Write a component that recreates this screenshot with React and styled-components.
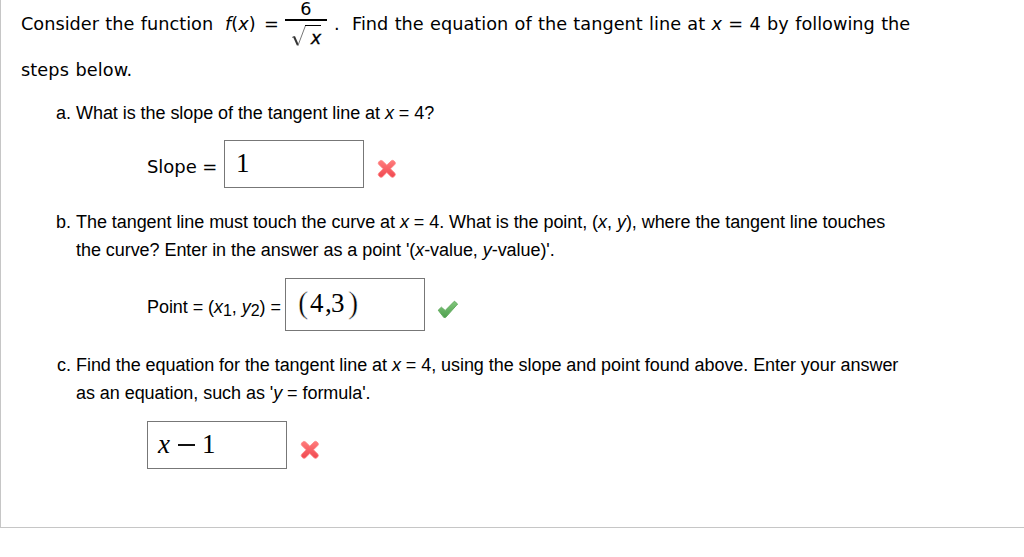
import React from 'react';
import styled, { createGlobalStyle } from 'styled-components';

const GlobalStyle = createGlobalStyle`
  body {
    margin: 0;
    background: #fff;
    color: #000;
  }
`;

const Page = styled.main`
  box-sizing: border-box;
  width: 1024px;
  height: 528px;
  border-left: 1px solid #c6c6c6;
  border-bottom: 1px solid #c6c6c6;
  font: 18px/27px 'Liberation Sans', Arial, sans-serif;
  letter-spacing: -0.055px;
  white-space: nowrap;
  overflow: hidden;
`;

const Intro = styled.header`
  padding-left: 20px;
  font-family: 'DejaVu Sans', Verdana, sans-serif;
  font-size: 17.7px;
  letter-spacing: 0.015px;
  word-spacing: 0.7px;
`;

const IntroLine = styled.div`
  display: grid;
  grid-template-columns: 204px 39px 21px 42px 25px 1fr;
  height: 48px;
  line-height: 48px;
`;

const IntroTail = styled.div`
  height: 44px;
  line-height: 44px;
  letter-spacing: 0.1px;
`;

const Period = styled.span`
  padding-left: 7px;
`;

const Fraction = styled.span`
  display: flex;
  flex-direction: column;
  align-items: center;
  height: 48px;
  line-height: 20px;
`;

const Numerator = styled.span`
  height: 19px;
  line-height: 18px;
`;

const FractionBar = styled.span`
  width: 100%;
  height: 2px;
  background: #000;
`;

const Denominator = styled.span`
  display: flex;
  height: 27px;
  line-height: 34px;
`;

const Radicand = styled.i`
  margin-left: -11px;
  -webkit-text-stroke: 0.3px #000;
`;

const Parts = styled.ol`
  list-style: none;
  margin: 0;
  padding: 8px 0 0 55px;
`;

const Part = styled.li`
  display: grid;
  grid-template-columns: 15px 1fr;
  column-gap: 5px;
  margin-bottom: 21px;
`;

const Marker = styled.span`
  text-align: right;
`;

const Line = styled.div`
  & + & {
    margin-top: 1px;
  }
`;

const AnswerRow = styled.div`
  display: flex;
  align-items: center;
  margin: ${(p) => p.$gap}px 0 0 71px;
`;

const AnswerLabel = styled.span`
  flex: none;
  width: ${(p) => p.$width}px;
  font-family: ${(p) => (p.$wide ? "'DejaVu Sans', Verdana, sans-serif" : 'inherit')};
  font-size: ${(p) => (p.$wide ? '18px' : '18px')};
  padding-top: ${(p) => p.$drop || 0}px;
`;

const Sub = styled.sub`
  font-size: 16px;
  line-height: 0;
  vertical-align: -3px;
`;

const AnswerBox = styled.div`
  box-sizing: border-box;
  display: flex;
  flex: none;
  width: 140px;
  height: ${(p) => p.$height}px;
  border: 1px solid #777;
  padding-left: ${(p) => p.$inset}px;
  font: 27px/${(p) => p.$line || 44}px 'Liberation Serif', 'Times New Roman', serif;
`;

const MathPart = styled.span`
  width: ${(p) => p.$width}px;
  font-style: ${(p) => (p.$italic ? 'italic' : 'normal')};
`;

const Paren = styled(MathPart)`
  font-size: 31px;
  -webkit-text-stroke: 0.5px #fff;
`;

const Minus = styled.span`
  width: 17px;
  height: 1.5px;
  margin: 22px 7px 0 0;
  background: #111;
`;

const Mark = styled.svg`
  flex: none;
  width: 22px;
  height: 22px;
  margin: 10px 0 0 11.5px;
`;

function Radical() {
  return (
    <svg width="31" height="27" viewBox="0 0 31 27" fill="none">
      <path d="M1 16.5 3 15.5" stroke="#777" strokeWidth="1" />
      <path d="M3 15.5 6.8 24" stroke="#333" strokeWidth="2" />
      <path d="M6.8 25 14.5 4.5" stroke="#777" strokeWidth="1" />
      <path d="M14 4.5H30" stroke="#000" strokeWidth="1" />
    </svg>
  );
}

function WrongMark() {
  return (
    <Mark viewBox="0 0 22 22" role="img" aria-label="Incorrect">
      <defs>
        <linearGradient id="wrong" x1="0" y1="0" x2="0" y2="1">
          <stop offset="0" stopColor="#ff7c7c" />
          <stop offset="1" stopColor="#f04850" />
        </linearGradient>
      </defs>
      <path
        d="M5 2.4Q6 2.4 6.6 3L10.8 7.1 15 3Q16.6 1.6 18.1 3L19 4Q20 5.2 18.8 6.5L14.5 10.8 18.8 15.1Q20 16.5 18.8 17.8L18 18.7Q16.6 20 15 18.7L10.8 14.5 6.6 18.7Q5 20 3.6 18.7L2.7 17.8Q1.6 16.5 2.8 15.1L7.1 10.8 2.8 6.5Q1.6 5.2 2.7 4L3.6 3Q4.2 2.4 5 2.4Z"
        fill="url(#wrong)"
        stroke="#ff8585"
        strokeWidth="0.8"
        strokeLinejoin="round"
      />
    </Mark>
  );
}

function RightMark() {
  return (
    <Mark viewBox="0 0 22 22" role="img" aria-label="Correct">
      <defs>
        <linearGradient id="right" x1="0" y1="0" x2="0" y2="1">
          <stop offset="0" stopColor="#82c77c" />
          <stop offset="1" stopColor="#4fa04f" />
        </linearGradient>
      </defs>
      <path
        d="M1.2 11.2 4.4 8.2 8.2 11.5 17.4 2.2 20.6 5 8.5 18.6 6.8 18.4Z"
        fill="url(#right)"
        stroke="#63ac60"
        strokeWidth="1"
        strokeLinejoin="round"
      />
    </Mark>
  );
}

export default function App() {
  return (
    <>
      <GlobalStyle />
      <Page>
        <Intro>
          <IntroLine>
            <span>Consider the function</span>
            <span><i>f</i>(<i>x</i>)</span>
            <span>=</span>
            <Fraction>
              <Numerator>6</Numerator>
              <FractionBar />
              <Denominator>
                <Radical />
                <Radicand>x</Radicand>
              </Denominator>
            </Fraction>
            <Period>.</Period>
            <span>Find the equation of the tangent line at <i>x</i> = 4 by following the</span>
          </IntroLine>
          <IntroTail>steps below.</IntroTail>
        </Intro>
        <Parts>
          <Part>
            <Marker>a.</Marker>
            <div>
              <Line>What is the slope of the tangent line at <i>x</i> = 4?</Line>
              <AnswerRow $gap={13}>
                <AnswerLabel $width={77} $wide $drop={5}>Slope =</AnswerLabel>
                <AnswerBox $height={48} $inset={11}>
                  <MathPart>1</MathPart>
                </AnswerBox>
                <WrongMark />
              </AnswerRow>
            </div>
          </Part>
          <Part>
            <Marker>b.</Marker>
            <div>
              <Line>The tangent line must touch the curve at <i>x</i> = 4. What is the point, (<i>x</i>, <i>y</i>), where the tangent line touches</Line>
              <Line>the curve? Enter in the answer as a point '(<i>x</i>-value, <i>y</i>-value)'.</Line>
              <AnswerRow $gap={14}>
                <AnswerLabel $width={138} $drop={6}>
                  Point = (<i>x</i><Sub>1</Sub>, <i>y</i><Sub>2</Sub>) =
                </AnswerLabel>
                <AnswerBox $height={53} $inset={12} $line={48}>
                  <Paren $width={12}>(</Paren>
                  <MathPart $width={15}>4</MathPart>
                  <MathPart $width={6}>,</MathPart>
                  <MathPart $width={17}>3</MathPart>
                  <Paren $width={10}>)</Paren>
                </AnswerBox>
                <RightMark />
              </AnswerRow>
            </div>
          </Part>
          <Part>
            <Marker>c.</Marker>
            <div>
              <Line>Find the equation for the tangent line at <i>x</i> = 4, using the slope and point found above. Enter your answer</Line>
              <Line>as an equation, such as '<i>y</i> = formula'.</Line>
              <AnswerRow $gap={14}>
                <AnswerBox $height={48} $inset={10}>
                  <MathPart $italic $width={20}>x</MathPart>
                  <Minus />
                  <MathPart>1</MathPart>
                </AnswerBox>
                <WrongMark />
              </AnswerRow>
            </div>
          </Part>
        </Parts>
      </Page>
    </>
  );
}
